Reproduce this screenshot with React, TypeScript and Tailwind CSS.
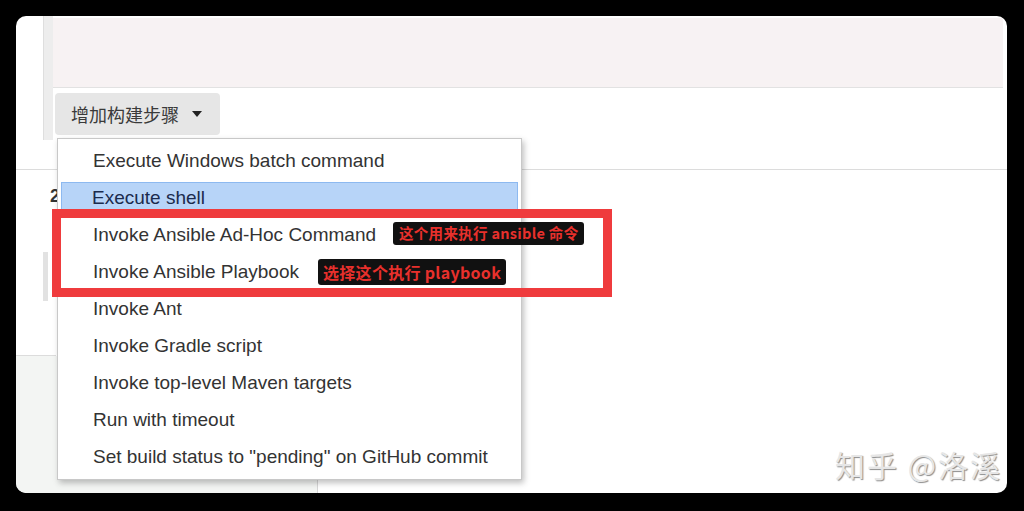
import React from "react";

const items = [
  "Execute Windows batch command",
  "Execute shell",
  "Invoke Ansible Ad-Hoc Command",
  "Invoke Ansible Playbook",
  "Invoke Ant",
  "Invoke Gradle script",
  "Invoke top-level Maven targets",
  "Run with timeout",
  'Set build status to "pending" on GitHub commit',
];

export default function App() {
  return (
    <div
      className="w-[1024px] h-[511px] bg-black pt-[16px] pl-[16px] pr-[17px] pb-[18px]"
      style={{ fontFamily: '"Liberation Sans", Arial, "Noto Sans CJK SC", sans-serif' }}
    >
      <div className="relative h-full bg-white rounded-[10px] overflow-hidden flex flex-col">
        {/* Section A */}
        <div className="flex h-[154px] border-b border-[#dcdcdc] shrink-0">
          <div className="w-[27px] shrink-0" />
          <div className="w-[10px] h-[124px] shrink-0 bg-[#ededed] border-l border-[#dedede]" />
          <div className="flex-1 flex flex-col">
            <div className="h-[70px] mt-[2px] mr-[4px] bg-[#f7f2f3] border-b border-[#e2e2e2]" />
            <div className="pl-[2px] pt-[5px]">
              <div className="w-[165px] h-[42px] bg-[#e6e6e6] rounded-[4px] flex items-center pl-[16px] gap-[13px] text-[#3a3a3a]">
                <span
                  className="text-[18px]"
                  style={{ fontFamily: '"Noto Sans CJK SC", sans-serif' }}
                >
                  增加构建步骤
                </span>
                <span className="w-0 h-0 border-l-[5px] border-r-[5px] border-t-[6px] border-l-transparent border-r-transparent border-t-[#222]" />
              </div>
            </div>
          </div>
        </div>

        {/* Section B */}
        <div className="flex h-[186px] shrink-0 border-b border-[#dcdcdc] w-[40px]">
          <div className="w-[27px] shrink-0" />
          <div className="w-[5px] shrink-0 flex flex-col">
            <div className="h-[82px]" />
            <div className="w-[5px] h-[49px] bg-[#e2e2e2]" />
          </div>
          <div className="pl-[2px] pt-[17px] text-[18px] font-bold text-[#333] leading-none">2</div>
        </div>

        {/* Section C */}
        <div className="flex-1 flex">
          <div className="w-[302px] bg-[#f3f5f3] border-r border-[#d6d6d6]" />
          <div className="flex-1" />
        </div>

        {/* Dropdown menu */}
        <div className="absolute left-[41px] top-[122px] w-[465px] h-[342px] bg-white border border-[#c8c8c8] shadow-[2px_3px_6px_rgba(0,0,0,0.25)] pt-[4px]">
          {items.map((t, i) => (
            <div
              key={t}
              className={
                i === 1
                  ? "h-[33px] my-[2px] mx-[3px] pl-[30px] flex items-center bg-[#b7d4f8] border border-[#8db9f0] text-[19px] text-[#1b2b4d]"
                  : "h-[37px] pl-[35px] flex items-center text-[19px] text-[#333]"
              }
            >
              {t}
            </div>
          ))}
        </div>

        {/* Red annotation box */}
        <div className="absolute left-[36px] top-[193px] w-[560px] h-[88px] border-[9px] border-[#ef3b3d]" />

        {/* Labels */}
        <div
          className="absolute left-[377px] top-[206px] h-[23px] px-[6px] flex items-center bg-[#111] rounded-[3px] text-[14.5px] font-bold text-[#e8302c] leading-none tracking-[0.3px]"
          style={{ fontFamily: '"Noto Sans CJK SC", sans-serif' }}
        >
          这个用来执行 ansible 命令
        </div>
        <div
          className="absolute left-[302px] top-[243px] h-[26px] px-[5px] flex items-center bg-[#111] rounded-[3px] text-[16px] font-bold text-[#e8302c] leading-none tracking-[0.3px]"
          style={{ fontFamily: '"Noto Sans CJK SC", sans-serif' }}
        >
          选择这个执行 playbook
        </div>

        {/* Watermark */}
        <div
          className="absolute left-[819px] top-[433px] text-[30px] text-[#e6e6e6] leading-none tracking-[2px]"
          style={{
            fontFamily: '"Noto Sans CJK SC", sans-serif',
            textShadow: "1px 1px 1px rgba(0,0,0,0.45)",
          }}
        >
          知乎 @洛溪
        </div>
      </div>
    </div>
  );
}
